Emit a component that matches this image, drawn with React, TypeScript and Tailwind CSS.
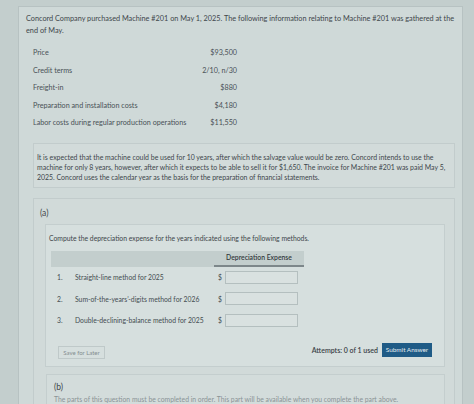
export default function App() {
  const facts: [string, string][] = [
    ["Price", "$93,500"],
    ["Credit terms", "2/10, n/30"],
    ["Freight-in", "$880"],
    ["Preparation and installation costs", "$4,180"],
    ["Labor costs during regular production operations", "$11,550"],
  ];
  const rows: [string, string][] = [
    ["1.", "Straight-line method for 2025"],
    ["2.", "Sum-of-the-years\u2019-digits method for 2026"],
    ["3.", "Double-declining-balance method for 2025"],
  ];
  return (
    <div className="w-[474px] h-[404px] overflow-hidden bg-[#c3cecd] pt-[6px] pl-[18px] pr-[11px] font-['Lato',sans-serif] text-[#454d52]">
      <div className="h-[430px] overflow-hidden border border-[#b7c2c2] bg-[#cfd9d8] px-[7px] pt-[6px]">
        <p className="text-[7.3px] leading-[12px] text-[#3e464b] whitespace-nowrap">
          Concord Company purchased Machine #201 on May 1, 2025. The following information relating to Machine #201 was gathered at the
          <br />
          end of May.
        </p>
        <div className="ml-[7px] mt-[8px] w-[204px] text-[7.2px] text-[#4a5257]">
          {facts.map(([l, v]) => (
            <div key={l} className="flex h-[17.5px] items-center justify-between">
              <span>{l}</span>
              <span>{v}</span>
            </div>
          ))}
        </div>
        <div className="ml-[7px] mt-[10px] border border-[#c2cccc] bg-[#d2dbda] pl-[3px] pt-[8px] pb-[5px]">
          <p className="text-[6.95px] leading-[10px] text-[#3e464b] whitespace-nowrap">
            It is expected that the machine could be used for 10 years, after which the salvage value would be zero. Concord intends to use the
            <br />
            machine for only 8 years, however, after which it expects to be able to sell it for $1,650. The invoice for Machine #201 was paid May 5,
            <br />
            2025. Concord uses the calendar year as the basis for the preparation of financial statements.
          </p>
        </div>
        <div className="ml-[7px] mt-[10px] h-[260px] border border-[#c2cccc] bg-[#d1dad9] pt-[8px]">
          <div className="pl-[6px] text-[8.5px] leading-[12px] text-[#3e464b]">(a)</div>
          <div className="ml-[11px] mr-[9px] mt-[5px] border border-[#c4cece] bg-[#d6dfde] pt-[8px] pb-[8px]">
            <p className="pl-[3px] text-[6.8px] leading-[10px] text-[#3e464b]">
              Compute the depreciation expense for the years indicated using the following methods.
            </p>
            <div className="ml-[5px] mt-[8px] w-[253px]">
              <div className="grid h-[16px] grid-cols-[163px_90px] bg-[#c3cecd]">
                <div />
                <div className="flex items-center justify-center border-b-2 border-[#7d878a] text-[6.8px] font-semibold text-[#333b40]">
                  Depreciation Expense
                </div>
              </div>
              {rows.map(([n, l]) => (
                <div key={n} className="grid h-[21.5px] grid-cols-[24px_139px_90px] items-center text-[6.8px] text-[#454d52]">
                  <span className="pl-[6px]">{n}</span>
                  <span className="whitespace-nowrap">{l}</span>
                  <div className="flex items-center pl-[4px]">
                    <span className="w-[7px]">$</span>
                    <div className="h-[13px] w-[73px] border border-[#b4bfbf] bg-[#d9e1e0]" />
                  </div>
                </div>
              ))}
            </div>
            <div className="mt-[11px] flex h-[16px] items-center justify-between pl-[12px] pr-[12px]">
              <div className="mt-[4px] flex h-[13px] w-[47px] items-center justify-center border border-[#bfc9c9] text-[6px] text-[#848d90]">
                Save for Later
              </div>
              <div className="flex items-center gap-[4px]">
                <span className="text-[7px] font-semibold text-[#3a4247]">Attempts: 0 of 1 used</span>
                <div className="flex h-[14px] w-[50px] items-center justify-center bg-[#1f5b86] text-[6.4px] text-[#e4ecf0]">
                  Submit Answer
                </div>
              </div>
            </div>
          </div>
          <div className="ml-[12px] mr-[9px] mt-[7px] h-[60px] border border-[#c4cece] bg-[#d3dcdb] pl-[7px] pt-[6px]">
            <div className="text-[8.5px] leading-[12px] text-[#3e464b]">(b)</div>
            <p className="mt-[1px] whitespace-nowrap text-[6.8px] leading-[10px] text-[#8a9396]">
              The parts of this question must be completed in order. This part will be available when you complete the part above.
            </p>
          </div>
        </div>
      </div>
    </div>
  );
}
